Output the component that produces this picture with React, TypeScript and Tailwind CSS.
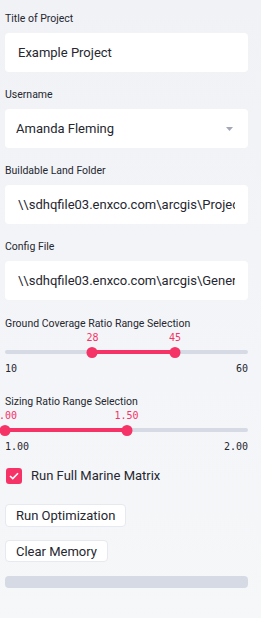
import React from 'react';

const TextField = ({ label, value }: { label: string; value: string }) => (
  <div className="flex flex-col">
    <label className="h-4 text-[10.5px] leading-4 text-[#262730]">{label}</label>
    <div className="mt-[6px] h-[39px] rounded bg-white pl-[13px] pr-[13px] flex items-center overflow-hidden">
      <span className="whitespace-nowrap overflow-hidden text-[13px] text-[#262730]">{value}</span>
    </div>
  </div>
);

const RangeSlider = ({
  label,
  min,
  max,
  low,
  high,
  fmt,
}: {
  label: string;
  min: number;
  max: number;
  low: number;
  high: number;
  fmt: (n: number) => string;
}) => {
  const pLow = ((low - min) / (max - min)) * 100;
  const pHigh = ((high - min) / (max - min)) * 100;
  return (
    <div className="flex flex-col">
      <label className="h-4 text-[10.5px] leading-4 text-[#262730]">{label}</label>
      <div className="relative h-[31px]">
        <div className="absolute left-0 right-0 top-[18px] h-[4px] rounded bg-[#d5dae5]" />
        <div
          className="absolute top-[18px] h-[4px] bg-[#f63366]"
          style={{ left: `${pLow}%`, width: `${pHigh - pLow}%` }}
        />
        {[low, high].map((v, i) => {
          const p = i === 0 ? pLow : pHigh;
          return (
            <React.Fragment key={i}>
              <span
                className="absolute top-0 h-3 leading-3 -translate-x-1/2 text-[10px] text-[#f63366] font-['DejaVu_Sans_Mono',monospace] whitespace-nowrap"
                style={{ left: `${p}%` }}
              >
                {fmt(v)}
              </span>
              <span
                className="absolute top-[14.5px] w-[11px] h-[11px] -translate-x-1/2 rounded-full bg-[#f63366]"
                style={{ left: `${p}%` }}
              />
            </React.Fragment>
          );
        })}
      </div>
      <div className="flex justify-between h-3 leading-3 text-[10px] text-[#262730] font-['DejaVu_Sans_Mono',monospace]">
        <span>{fmt(min)}</span>
        <span>{fmt(max)}</span>
      </div>
    </div>
  );
};

export default function App() {
  return (
    <div className="flex min-h-[618px] bg-white font-['Roboto',sans-serif]">
      <div className="w-[261px] min-h-[618px] overflow-hidden bg-gradient-to-b from-[#f0f2f6] to-[#f6f7f9] pl-[5px] pr-[13px] pt-[11px]">
        <div className="flex flex-col gap-[15px]">
          <TextField label="Title of Project" value="Example Project" />
          <div className="flex flex-col">
            <label className="h-4 text-[10.5px] leading-4 text-[#262730]">Username</label>
            <div className="mt-[6px] h-[39px] rounded bg-white pl-[11px] pr-[15px] flex items-center justify-between">
              <span className="text-[13px] text-[#262730]">Amanda Fleming</span>
              <svg width="7" height="4" viewBox="0 0 7 4">
                <path d="M0 0 L7 0 L3.5 4 Z" fill="#a3a8b8" />
              </svg>
            </div>
          </div>
          <TextField label="Buildable Land Folder" value="\\sdhqfile03.enxco.com\arcgis\Projects" />
          <TextField label="Config File" value="\\sdhqfile03.enxco.com\arcgis\General" />
        </div>

        <div className="mt-[16px]">
          <RangeSlider
            label="Ground Coverage Ratio Range Selection"
            min={10}
            max={60}
            low={28}
            high={45}
            fmt={(n) => String(n)}
          />
        </div>
        <div className="mt-[19px]">
          <RangeSlider
            label="Sizing Ratio Range Selection"
            min={1}
            max={2}
            low={1}
            high={1.5}
            fmt={(n) => n.toFixed(2)}
          />
        </div>

        <div className="mt-[15px] h-4 flex items-center gap-[9px] pl-[1px]">
          <span className="w-4 h-4 rounded-[3px] bg-[#f63366] flex items-center justify-center">
            <svg width="10" height="8" viewBox="0 0 10 8">
              <path d="M1 4 L3.8 6.6 L9 1.2" fill="none" stroke="white" strokeWidth="1.6" />
            </svg>
          </span>
          <span className="text-[13px] leading-4 text-[#262730]">Run Full Marine Matrix</span>
        </div>

        <div className="mt-[20px] flex flex-col items-start gap-[13px]">
          <button className="h-[23px] px-[10px] rounded bg-white border border-[#e6e9ef] text-[13px] leading-none text-[#262730]">
            Run Optimization
          </button>
          <button className="h-[22px] px-[10px] rounded bg-white border border-[#e6e9ef] text-[13px] leading-none text-[#262730]">
            Clear Memory
          </button>
        </div>

        <div className="mt-[14px] h-[12px] rounded bg-[#d5dae5]" />
      </div>
    </div>
  );
}
